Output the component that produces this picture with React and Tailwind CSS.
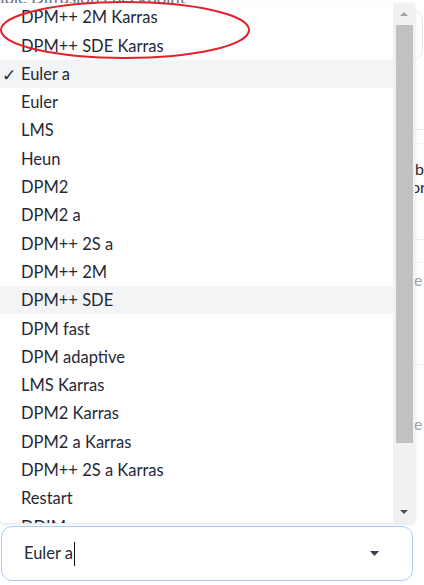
const samplers = [
  'DPM++ 2M Karras',
  'DPM++ SDE Karras',
  'Euler a',
  'Euler',
  'LMS',
  'Heun',
  'DPM2',
  'DPM2 a',
  'DPM++ 2S a',
  'DPM++ 2M',
  'DPM++ SDE',
  'DPM fast',
  'DPM adaptive',
  'LMS Karras',
  'DPM2 Karras',
  'DPM2 a Karras',
  'DPM++ 2S a Karras',
  'Restart',
  'DDIM',
];

const selected = 'Euler a';
const hovered = 'DPM++ SDE';

function PageBehind() {
  return (
    <div className="flex flex-col h-full">
      <div className="h-[3px] overflow-visible">
        <div className="-mt-[11px] -ml-[19px] text-[17px] leading-[18px] text-[#6b7280] whitespace-nowrap">
          Stable Diffusion checkpoint
        </div>
      </div>
      <div className="flex-1 flex flex-col pl-[300px]">
        <div className="mt-[7px] h-[50px] mr-[1px] rounded-[10px] border border-[#e5e7eb]" />
        <div className="mt-[69px] h-px bg-[#e5e7eb]" />
        <div className="mt-[13px] h-px bg-[#f1f2f4]" />
        <div className="mt-[16px] pl-[115px] text-[16px] leading-[18px] text-[#1f2937]">b</div>
        <div className="pl-[111px] text-[16px] leading-[18px] text-[#1f2937]">or</div>
        <div className="mt-[43px] h-px bg-[#eceef1]" />
        <div className="mt-[22px] h-px bg-[#f4f5f7]" />
        <div className="mt-[8px] pl-[114px] text-[16px] leading-[18px] text-[#9ca3af]">e</div>
        <div className="mt-[75px] h-px bg-[#eceef1]" />
        <div className="mt-[50px] pl-[114px] text-[16px] leading-[18px] text-[#9ca3af]">e</div>
      </div>
      <div className="pl-[1px] pr-[11px] pb-[4px]">
        <div className="h-[55px] rounded-[11px] border border-[#a9cdf7] flex items-center pl-[22px] pr-[33px]">
          <span className="text-[16.5px] text-[#1f2937]">Euler a</span>
          <span className="ml-[1px] w-px h-[24px] bg-[#111]" />
          <svg className="ml-auto" width="9" height="5" viewBox="0 0 9 5">
            <path d="M0 0 L9 0 L4.5 5 Z" fill="#374151" />
          </svg>
        </div>
      </div>
    </div>
  );
}

function Scrollbar() {
  return (
    <div className="w-[22px] h-full bg-[#f1f1f1] flex flex-col items-center">
      <div className="h-[22px] flex items-center justify-center">
        <svg width="8" height="4" viewBox="0 0 8 4">
          <path d="M0 4 L8 4 L4 0 Z" fill="#a3a3a3" />
        </svg>
      </div>
      <div className="w-[17px] h-[418px] bg-[#c1c1c1]" />
      <div className="flex-1" />
      <div className="h-[22px] flex items-center justify-center">
        <svg width="8" height="4" viewBox="0 0 8 4">
          <path d="M0 0 L8 0 L4 4 Z" fill="#505050" />
        </svg>
      </div>
    </div>
  );
}

function Options() {
  return (
    <div className="absolute left-0 top-[3px] w-[415px] h-[520px] flex bg-white rounded-b-[4px] shadow-[0_1px_3px_rgba(0,0,0,0.12)] overflow-hidden">
      <div className="flex-1 overflow-hidden flex flex-col">
        {samplers.map(name => (
          <div
            key={name}
            className={
              'shrink-0 h-[28.3px] pt-[1px] flex items-center text-[16.5px] text-[#1f2937] whitespace-nowrap ' +
              (name === selected || name === hovered ? 'bg-[#f3f4f6]' : '')
            }
          >
            <span className="w-[21px] pl-[2px] text-[17px] leading-none">
              {name === selected ? '✓' : ''}
            </span>
            <span>{name}</span>
          </div>
        ))}
      </div>
      <Scrollbar />
    </div>
  );
}

export default function App() {
  return (
    <div className="relative w-[424px] h-[585px] overflow-hidden bg-white font-['Lato',sans-serif]">
      <PageBehind />
      <Options />
      <svg
        className="absolute left-0 top-0 pointer-events-none"
        width="260"
        height="70"
        viewBox="0 0 260 70"
      >
        <ellipse cx="125" cy="30" rx="124" ry="28" fill="none" stroke="#e3222b" strokeWidth="2" />
      </svg>
    </div>
  );
}
